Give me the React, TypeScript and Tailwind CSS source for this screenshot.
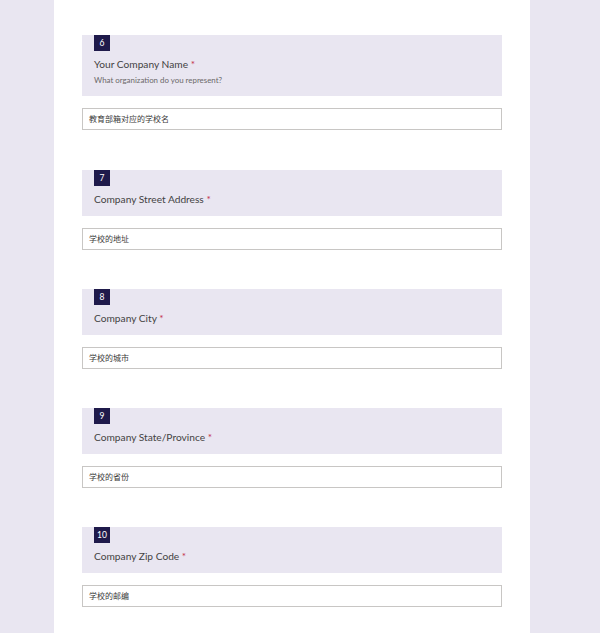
import React from 'react';

const questions = [
  { n: 6, title: 'Your Company Name', desc: 'What organization do you represent?', value: '教育部箱对应的学校名' },
  { n: 7, title: 'Company Street Address', value: '学校的地址' },
  { n: 8, title: 'Company City', value: '学校的城市' },
  { n: 9, title: 'Company State/Province', value: '学校的省份' },
  { n: 10, title: 'Company Zip Code', value: '学校的邮编' },
];

function Question({ n, title, desc, value }: { n: number; title: string; desc?: string; value: string }) {
  return (
    <div className="mb-[39px] first:mb-[40px]">
      <div className="bg-[#e9e6f1] pl-[12px] pr-3 pb-[8px]">
        <div className="flex h-[16px] min-w-[16px] w-fit items-center justify-center bg-[#1f1a4b] px-[3px] text-[8.5px] text-white">
          {n}
        </div>
        <div className="mt-[4px] h-[18px] text-[10.2px] leading-[18px] text-[#444343]">
          {title} <span className="text-[#c4314b]">*</span>
        </div>
        {desc && <div className="h-[15px] text-[7.9px] leading-[15px] text-[#6b6969]">{desc}</div>}
      </div>
      <div className="mt-[12px] flex h-[22px] items-center border border-[#c8c6c4] bg-white px-[6px] text-[8px] text-[#3b3a39]">
        {value}
      </div>
    </div>
  );
}

export default function App() {
  return (
    <div
      className="flex h-[633px] w-[600px] overflow-hidden bg-[#e9e6f1]"
      style={{ fontFamily: 'Lato, "Noto Sans CJK SC", sans-serif' }}
    >
      <div className="ml-[54px] h-full w-[476px] bg-white px-[28px] pt-[35px]">
        {questions.map((q) => (
          <Question key={q.n} {...q} />
        ))}
      </div>
    </div>
  );
}
